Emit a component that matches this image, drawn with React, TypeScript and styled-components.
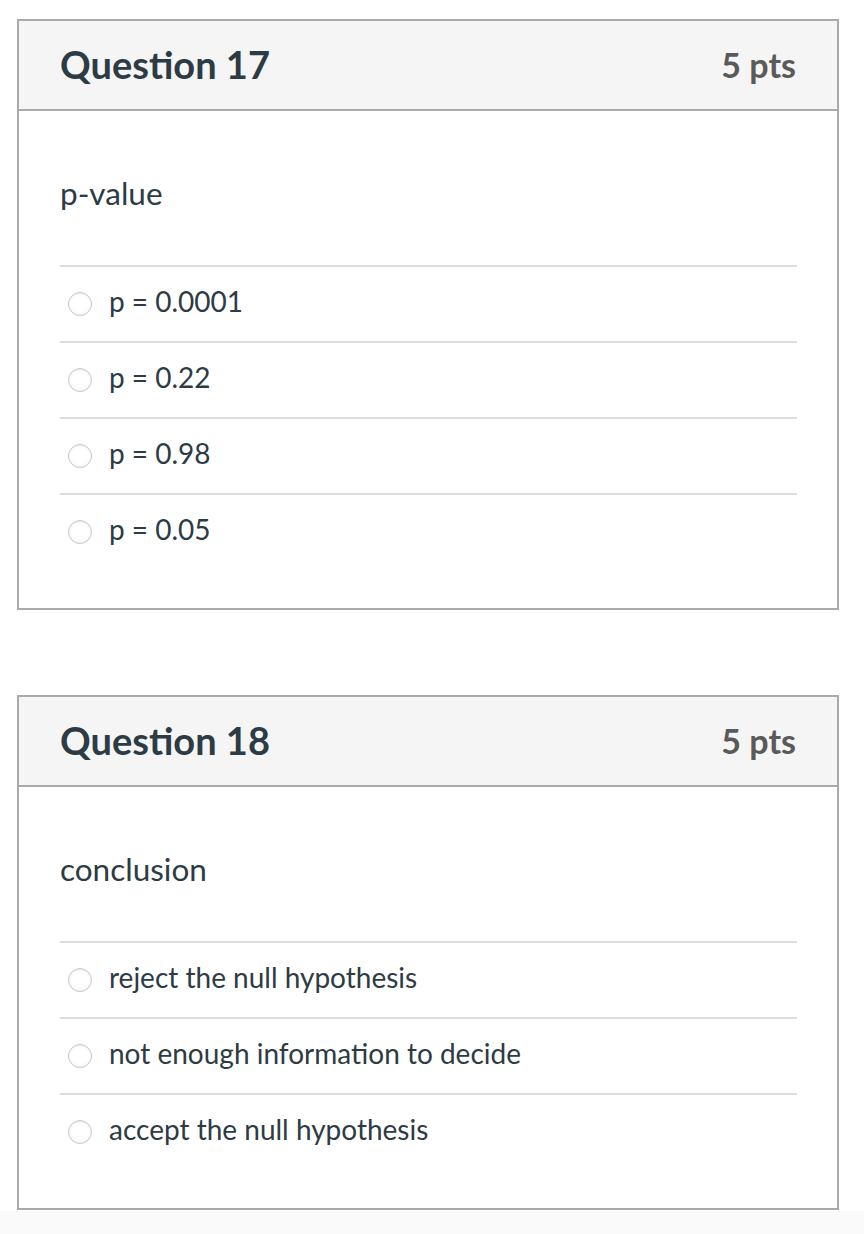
import React from "react";
import styled, { createGlobalStyle } from "styled-components";

const GlobalStyle = createGlobalStyle`
  html, body {
    margin: 0;
    padding: 0;
    background: #fafafa;
  }
  body {
    font-family: Lato, "Open Sans", "Liberation Sans", sans-serif;
    color: #2d3b45;
  }
`;

const Page = styled.div`
  background: #fff;
  padding: 19px 25px 1px 17px;
  display: flex;
  flex-direction: column;
  gap: 85px;
`;

const Card = styled.div`
  border: 2px solid #aaaaaa;
  background: #fff;
`;

const Header = styled.div`
  display: flex;
  align-items: center;
  justify-content: space-between;
  height: 88px;
  padding: 0 41px 0 41px;
  background: #f5f5f5;
  border-bottom: 2px solid #aaaaaa;
`;

const Title = styled.div`
  font-size: 38px;
  font-weight: 700;
  color: #2d3b45;
  margin-top: -2px;
`;

const Points = styled.div`
  font-size: 34px;
  font-weight: 700;
  color: #5a5a5a;
  margin-top: -2px;
`;

const Body = styled.div`
  padding: 61px 40px 39px 41px;
`;

const QuestionText = styled.div`
  font-size: 31.5px;
  line-height: 42px;
  height: 42px;
  margin-bottom: 51px;
`;

const Answers = styled.div`
  display: flex;
  flex-direction: column;
`;

const Answer = styled.label`
  display: flex;
  align-items: center;
  height: 74px;
  border-top: 2px solid #dddddd;
  padding-left: 8px;
  gap: 17px;
`;

const Radio = styled.span`
  box-sizing: border-box;
  width: 24px;
  height: 24px;
  border-radius: 50%;
  border: 1px solid #c8c8c8;
  background: radial-gradient(circle at 50% 40%, #ffffff 55%, #f0f0f0 100%);
  box-shadow: inset 0 1px 2px rgba(0, 0, 0, 0.08);
  flex-shrink: 0;
`;

const AnswerText = styled.span`
  font-size: 28px;
  color: #2d3b45;
  margin-top: -6px;
`;

interface Question {
  number: number;
  points: string;
  text: string;
  answers: string[];
}

const questions: Question[] = [
  {
    number: 17,
    points: "5 pts",
    text: "p-value",
    answers: ["p = 0.0001", "p = 0.22", "p = 0.98", "p = 0.05"],
  },
  {
    number: 18,
    points: "5 pts",
    text: "conclusion",
    answers: [
      "reject the null hypothesis",
      "not enough information to decide",
      "accept the null hypothesis",
    ],
  },
];

const QuestionCard: React.FC<{ q: Question }> = ({ q }) => (
  <Card>
    <Header>
      <Title>Question {q.number}</Title>
      <Points>{q.points}</Points>
    </Header>
    <Body>
      <QuestionText>{q.text}</QuestionText>
      <Answers>
        {q.answers.map((a, i) => (
          <Answer key={`q${q.number}-a${i}`}>
            <Radio />
            <AnswerText>{a}</AnswerText>
          </Answer>
        ))}
      </Answers>
    </Body>
  </Card>
);

export default function App() {
  return (
    <>
      <GlobalStyle />
      <Page>
        {questions.map((q) => (
          <QuestionCard key={q.number} q={q} />
        ))}
      </Page>
    </>
  );
}
